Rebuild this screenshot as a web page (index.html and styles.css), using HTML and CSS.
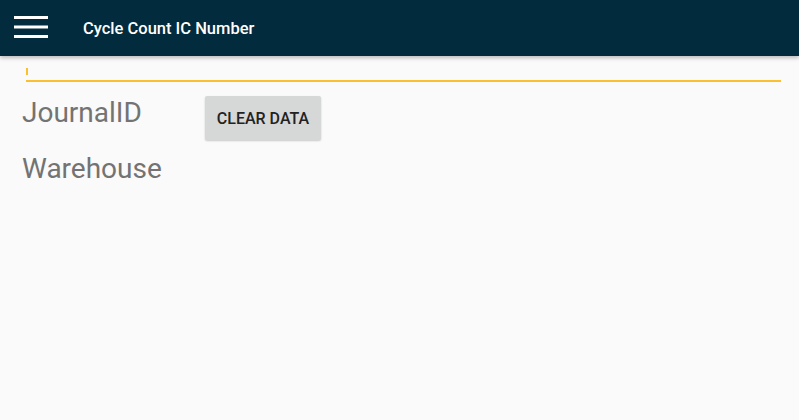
FILE: index.html
```html
<!DOCTYPE html>
<html>
<head>
<meta charset="utf-8">
<link rel="stylesheet" href="styles.css">
</head>
<body>
<header class="appbar">
  <svg class="menu" width="34" height="24" viewBox="0 0 34 24">
    <rect x="0" y="0" width="34" height="3" fill="#fff"/>
    <rect x="0" y="9.5" width="34" height="3" fill="#fff"/>
    <rect x="0" y="19" width="34" height="3" fill="#fff"/>
  </svg>
  <div class="title">Cycle Count IC Number</div>
</header>
<main class="content">
  <div class="field"><span class="cursor"></span></div>
  <div class="row">
    <div class="label">JournalID</div>
    <button class="btn">CLEAR DATA</button>
  </div>
  <div class="label">Warehouse</div>
</main>
</body>
</html>
```
FILE: styles.css
```css
html, body { margin: 0; padding: 0; }
body {
  background: #fafafa;
  font-family: Roboto, "Noto Sans", sans-serif;
  width: 799px;
  height: 420px;
  overflow: hidden;
}
.appbar {
  height: 56px;
  background: #022b3e;
  display: flex;
  align-items: center;
  box-shadow: 0 2px 4px rgba(0,0,0,0.25);
  position: relative;
}
.menu { margin-left: 14px; margin-top: -1px; }
.title {
  color: #fff;
  font-weight: 500;
  font-size: 16.5px;
  margin-left: 35px;
  margin-top: 0px;
}
.content { padding: 0 0 0 22px; }
.field {
  margin: 11px 18px 0 4px;
  height: 13px;
  border-bottom: 2px solid #fbc02d;
  position: relative;
}
.cursor {
  position: absolute;
  left: 0;
  top: 1px;
  width: 2px;
  height: 7px;
  background: #fbc02d;
}
.row {
  display: flex;
  align-items: flex-start;
  margin-top: 15px;
}
.label {
  font-size: 28px;
  color: #737373;
  line-height: 32px;
}
.row .label { width: 183px; }
.row + .label { margin-top: 13px; }
.btn {
  font-family: Roboto, sans-serif;
  font-weight: 500;
  font-size: 16px;
  color: #222;
  background: #d6d7d7;
  border: none;
  border-radius: 2px;
  box-shadow: 0 1px 2px rgba(0,0,0,0.2);
  width: 116px;
  height: 44px;
  padding: 0;
  margin-top: -1px;
}
```
